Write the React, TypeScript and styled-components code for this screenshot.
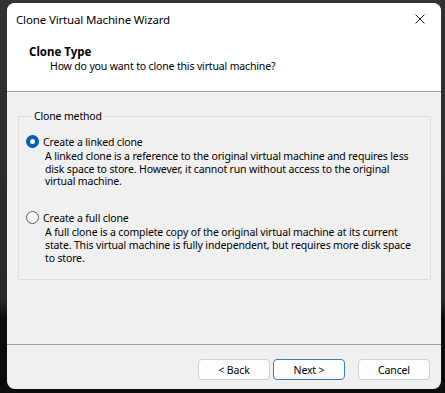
import React, { useState } from 'react';
import styled, { createGlobalStyle } from 'styled-components';

const Global = createGlobalStyle`
  html, body {
    margin: 0;
    padding: 0;
    height: 393px;
    overflow: hidden;
    background: linear-gradient(to bottom, #323232 0, #2a2a2a 300px, #0c0c0c 318px);
    font-family: "Segoe UI", "Noto Sans", sans-serif;
    color: #000;
  }
`;

const Window = styled.div`
  margin: 3px 0 0 7px;
  width: 434px;
  height: 386px;
  border-radius: 8px;
  overflow: hidden;
  background: #f0f0f0;
  display: flex;
  flex-direction: column;
`;

const Header = styled.div`
  background: #fff;
  height: 88px;
  border-bottom: 1px solid #a0a0a0;
  display: flex;
  flex-direction: column;
`;

const TitleBar = styled.div`
  height: 32px;
  display: flex;
  align-items: center;
  justify-content: space-between;
  padding: 0 16px 0 9px;
`;

const TitleText = styled.span`
  font-size: 11.5px;
  letter-spacing: -0.15px;
`;

const CloseBtn = styled.svg`
  width: 10px;
  height: 10px;
`;

const PageHead = styled.div`
  padding: 9px 0 0 22px;
`;

const PageTitle = styled.div`
  font-size: 11.5px;
  font-weight: 700;
  line-height: 15px;
`;

const PageSub = styled.div`
  font-size: 10.5px;
  letter-spacing: -0.15px;
  line-height: 14px;
  padding-left: 21px;
`;

const Body = styled.div`
  flex: 1;
  padding: 18px 10px 0 11px;
`;

const Group = styled.fieldset`
  margin: 0;
  padding: 11px 0 15px 7px;
  border: 1px solid #dcdcdc;
  border-radius: 1px;
`;

const Legend = styled.legend`
  font-size: 10.5px;
  letter-spacing: -0.15px;
  line-height: 13px;
  padding: 0 2px;
  margin-left: 6px;
`;

const Option = styled.label<{ $gap?: number }>`
  display: block;
  margin-top: ${p => p.$gap ?? 0}px;
  cursor: default;
`;

const OptionRow = styled.div`
  display: flex;
  align-items: center;
  height: 15px;
  font-size: 10.5px;
  letter-spacing: -0.15px;
`;

const Radio = styled.span<{ $on: boolean }>`
  width: 13px;
  height: 13px;
  box-sizing: border-box;
  border-radius: 50%;
  margin-right: 4px;
  flex: none;
  display: flex;
  align-items: center;
  justify-content: center;
  background: ${p => (p.$on ? '#005fb8' : '#f7f7f7')};
  border: ${p => (p.$on ? 'none' : '1px solid #5c5c5c')};
  &::after {
    content: '';
    display: ${p => (p.$on ? 'block' : 'none')};
    width: 5px;
    height: 5px;
    border-radius: 50%;
    background: #fff;
  }
`;

const Desc = styled.div`
  font-size: 10.5px;
  letter-spacing: -0.15px;
  line-height: 12.7px;
  padding: 1px 0 0 19px;
  width: 375px;
`;

const Footer = styled.div`
  border-top: 1px solid #a0a0a0;
  height: 45px;
  display: flex;
  justify-content: flex-end;
  align-items: flex-start;
  padding: 14px 11px 0 0;
  box-sizing: border-box;
`;

const Button = styled.button<{ $primary?: boolean; $gap?: number }>`
  width: 72px;
  height: 21px;
  margin-left: ${p => p.$gap ?? 0}px;
  box-sizing: border-box;
  font-family: inherit;
  font-size: 10.5px;
  letter-spacing: -0.15px;
  color: #000;
  background: #fdfdfd;
  border: 1px solid ${p => (p.$primary ? '#3d78b8' : '#d0d0d0')};
  border-radius: 4px;
  padding: 0;
`;

export default function App() {
  const [mode, setMode] = useState<'linked' | 'full'>('linked');
  return (
    <>
      <Global />
      <Window>
        <Header>
          <TitleBar>
            <TitleText>Clone Virtual Machine Wizard</TitleText>
            <CloseBtn viewBox="0 0 10 10">
              <path d="M0.5 0.5 L9.5 9.5 M9.5 0.5 L0.5 9.5" stroke="#1a1a1a" strokeWidth="1" />
            </CloseBtn>
          </TitleBar>
          <PageHead>
            <PageTitle>Clone Type</PageTitle>
            <PageSub>How do you want to clone this virtual machine?</PageSub>
          </PageHead>
        </Header>
        <Body>
          <Group>
            <Legend>Clone method</Legend>
            <Option onClick={() => setMode('linked')}>
              <OptionRow>
                <Radio $on={mode === 'linked'} />
                Create a linked clone
              </OptionRow>
              <Desc>
                A linked clone is a reference to the original virtual machine and requires less
                disk space to store. However, it cannot run without access to the original
                virtual machine.
              </Desc>
            </Option>
            <Option $gap={22} onClick={() => setMode('full')}>
              <OptionRow>
                <Radio $on={mode === 'full'} />
                Create a full clone
              </OptionRow>
              <Desc>
                A full clone is a complete copy of the original virtual machine at its current
                state. This virtual machine is fully independent, but requires more disk space
                to store.
              </Desc>
            </Option>
          </Group>
        </Body>
        <Footer>
          <Button>&lt; Back</Button>
          <Button $primary $gap={3}>Next &gt;</Button>
          <Button $gap={13}>Cancel</Button>
        </Footer>
      </Window>
    </>
  );
}
